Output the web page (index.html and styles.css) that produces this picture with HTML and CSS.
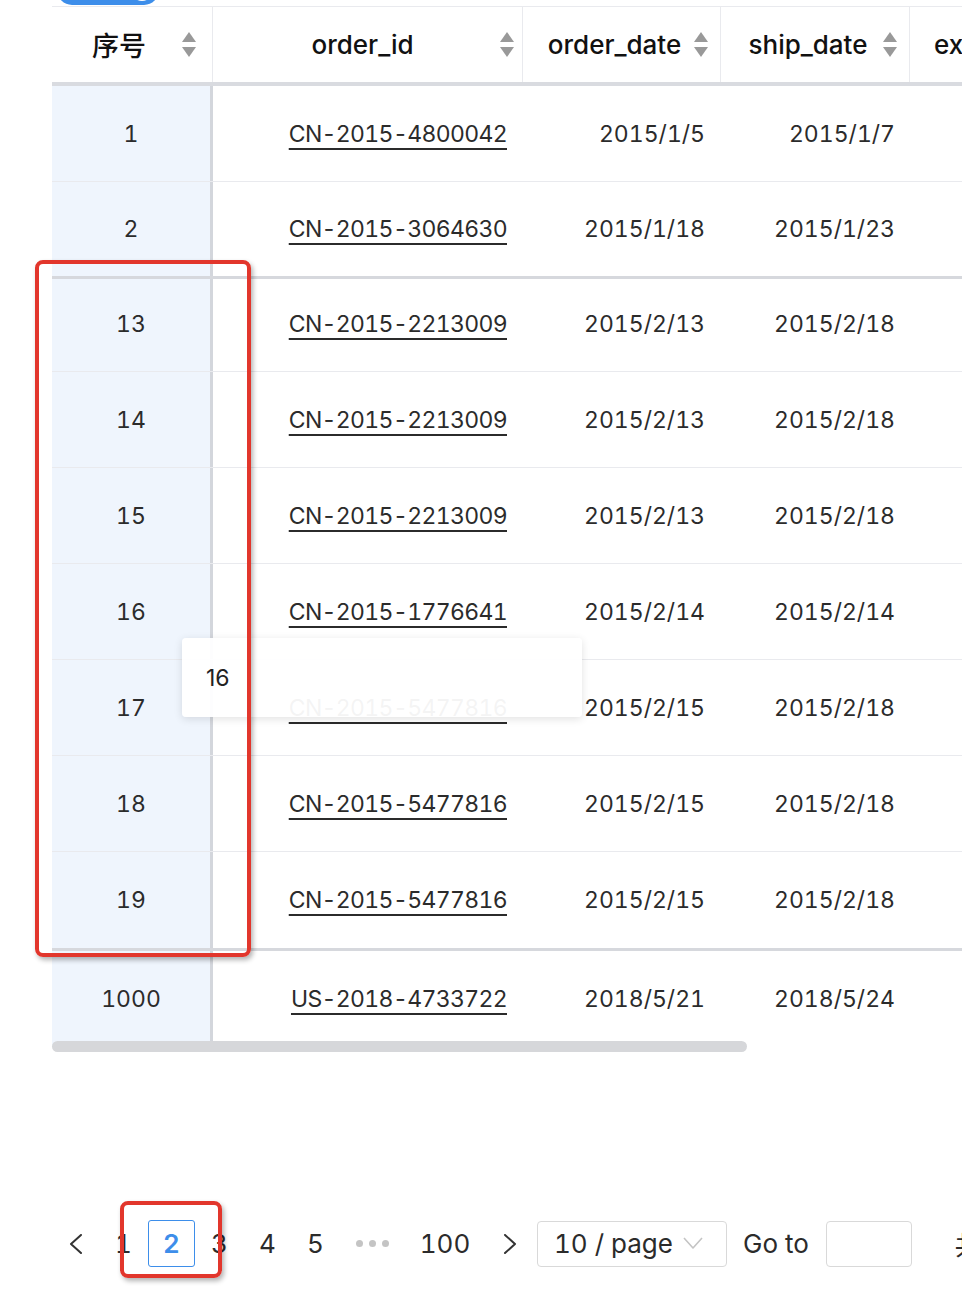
FILE: index.html
```html
<!DOCTYPE html>
<html lang="zh">
<head>
<meta charset="utf-8">
<title>Table</title>
<link rel="stylesheet" href="styles.css">
</head>
<body>
<div class="page">
  <div class="switch"><span class="knob"></span></div>
  <div class="table">
    <div class="row thead">
      <div class="th c1"><span class="lbl">序号</span><svg class="sort" width="14" height="25" viewBox="0 0 14 25"><path d="M7 0 L14 10 L0 10 Z"/><path d="M0 15 L14 15 L7 25 Z"/></svg></div>
      <div class="th c2"><span class="lbl">order_id</span><svg class="sort" width="14" height="25" viewBox="0 0 14 25"><path d="M7 0 L14 10 L0 10 Z"/><path d="M0 15 L14 15 L7 25 Z"/></svg></div>
      <div class="th c3"><span class="lbl">order_date</span><svg class="sort" width="14" height="25" viewBox="0 0 14 25"><path d="M7 0 L14 10 L0 10 Z"/><path d="M0 15 L14 15 L7 25 Z"/></svg></div>
      <div class="th c4"><span class="lbl">ship_date</span><svg class="sort" width="14" height="25" viewBox="0 0 14 25"><path d="M7 0 L14 10 L0 10 Z"/><path d="M0 15 L14 15 L7 25 Z"/></svg></div>
      <div class="th c5"><span class="lbl-left">ex_date</span></div>
    </div>

    <div class="section top">
      <div class="row"><div class="td c1">1</div><div class="td c2"><span class="link">CN-2015-4800042</span></div><div class="td c3">2015/1/5</div><div class="td c4">2015/1/7</div><div class="td c5"></div></div>
      <div class="row"><div class="td c1">2</div><div class="td c2"><span class="link">CN-2015-3064630</span></div><div class="td c3">2015/1/18</div><div class="td c4">2015/1/23</div><div class="td c5"></div></div>
    </div>

    <div class="section mid">
      <div class="mid-inner">
        <div class="row"><div class="td c1">13</div><div class="td c2"><span class="link">CN-2015-2213009</span></div><div class="td c3">2015/2/13</div><div class="td c4">2015/2/18</div><div class="td c5"></div></div>
        <div class="row"><div class="td c1">14</div><div class="td c2"><span class="link">CN-2015-2213009</span></div><div class="td c3">2015/2/13</div><div class="td c4">2015/2/18</div><div class="td c5"></div></div>
        <div class="row"><div class="td c1">15</div><div class="td c2"><span class="link">CN-2015-2213009</span></div><div class="td c3">2015/2/13</div><div class="td c4">2015/2/18</div><div class="td c5"></div></div>
        <div class="row"><div class="td c1">16</div><div class="td c2"><span class="link">CN-2015-1776641</span></div><div class="td c3">2015/2/14</div><div class="td c4">2015/2/14</div><div class="td c5"></div></div>
        <div class="row"><div class="td c1">17</div><div class="td c2"><span class="link">CN-2015-5477816</span></div><div class="td c3">2015/2/15</div><div class="td c4">2015/2/18</div><div class="td c5"></div></div>
        <div class="row"><div class="td c1">18</div><div class="td c2"><span class="link">CN-2015-5477816</span></div><div class="td c3">2015/2/15</div><div class="td c4">2015/2/18</div><div class="td c5"></div></div>
        <div class="row"><div class="td c1">19</div><div class="td c2"><span class="link">CN-2015-5477816</span></div><div class="td c3">2015/2/15</div><div class="td c4">2015/2/18</div><div class="td c5"></div></div>
      </div>
    </div>

    <div class="section last">
      <div class="row"><div class="td c1">1000</div><div class="td c2"><span class="link">US-2018-4733722</span></div><div class="td c3">2018/5/21</div><div class="td c4">2018/5/24</div><div class="td c5"></div></div>
    </div>

    <div class="hscroll"></div>
    <div class="tooltip">16</div>
  </div>

  <div class="pager">
    <div class="pg-item arrow"><svg width="14" height="20" viewBox="0 0 14 20"><path d="M12 1 L2 10 L12 19" fill="none" stroke="#333" stroke-width="2" stroke-linecap="round" stroke-linejoin="round"/></svg></div>
    <div class="pg-item">1</div>
    <div class="pg-item active">2</div>
    <div class="pg-item">3</div>
    <div class="pg-item">4</div>
    <div class="pg-item">5</div>
    <div class="pg-item dots"><span class="dot"></span><span class="dot"></span><span class="dot"></span></div>
    <div class="pg-item wide">100</div>
    <div class="pg-item arrow"><svg width="14" height="20" viewBox="0 0 14 20"><path d="M2 1 L12 10 L2 19" fill="none" stroke="#333" stroke-width="2" stroke-linecap="round" stroke-linejoin="round"/></svg></div>
    <div class="select"><span>10 / page</span><svg width="20" height="13" viewBox="0 0 20 13"><path d="M1 1 L10 11 L19 1" fill="none" stroke="#c4c4c4" stroke-width="1.6" stroke-linejoin="round"/></svg></div>
    <span class="goto">Go to</span>
    <div class="input"></div>
    <span class="total">共 1000 条</span>
  </div>

  <div class="mark mark-col"></div>
  <div class="mark mark-page"></div>
</div>
</body>
</html>
```

FILE: styles.css
```css
html, body {
  margin: 0;
  padding: 0;
  overflow: hidden;
  background: #ffffff;
}
body {
  font-family: Inter, "Noto Sans CJK SC", sans-serif;
  font-variant-numeric: tabular-nums;
  color: #2b2b2b;
  width: 962px;
  height: 1316px;
}
.page {
  position: relative;
  display: flow-root;
  padding-left: 52px;
  height: 1316px;
  box-sizing: border-box;
}
.switch {
  width: 102px;
  height: 30px;
  margin-top: -25px;
  margin-left: 5px;
  border-radius: 15px;
  background: #3d8eea;
  display: flex;
  justify-content: flex-end;
  align-items: center;
  padding-right: 6px;
  box-sizing: border-box;
}
.knob {
  width: 22px;
  height: 22px;
  border-radius: 50%;
  background: #ffffff;
}
.table {
  position: relative;
  width: 1200px;
  margin-top: 1px;
}
.row {
  display: grid;
  grid-template-columns: 161px 310px 198px 189px 342px;
  height: 96px;
  border-bottom: 1px solid #e9eaee;
  box-sizing: border-box;
}
.section .row:last-child {
  border-bottom: none;
  height: 95px;
}
.section.top .row:last-child { height: 94px; }
.thead {
  height: 80px;
  border-top: 1px solid #e9eaee;
  border-bottom: 4px solid #d9dbe0;
}
.th {
  display: flex;
  align-items: center;
  padding: 0 12px 0 12px;
  border-right: 1px solid #e9eaee;
  font-size: 26px;
  font-weight: 500;
  color: #111111;
  box-sizing: border-box;
}
.th.c1 { padding-right: 16px; padding-left: 4px; font-size: 27px; }
.th.c2 { padding-right: 8px; }
.th .lbl {
  flex: 1;
  text-align: center;
}
.th .lbl-left {
  padding-left: 12px;
  white-space: nowrap;
}
.th.c5 { border-right: none; }
.sort { fill: #999999; flex: none; }
.section {
  border-bottom: 3px solid #d6d8dd;
}
.section.last { border-bottom: none; }
.mid {
  height: 669px;
  overflow: hidden;
}
.mid-inner { margin-top: -3px; }
.mid .row:last-child { height: 96px; }
.td {
  display: flex;
  align-items: center;
  font-size: 23px;
  color: #2b2b2b;
  box-sizing: border-box;
  white-space: nowrap;
}
.td.c1 {
  justify-content: center;
  background: #eff5fd;
  border-right: 3px solid #d3d6dc;
}
.td.c2, .td.c3, .td.c4 {
  justify-content: flex-end;
  padding-right: 16px;
}
.td.c4 { padding-right: 15px; }
.link {
  text-decoration: underline;
  text-decoration-thickness: 2px;
  text-underline-offset: 6px;
  letter-spacing: -0.65px;
  color: #2b2b2b;
}
.hscroll {
  position: absolute;
  left: 0;
  bottom: -6px;
  width: 695px;
  height: 11px;
  border-radius: 6px;
  background: #d6d7da;
}
.tooltip {
  position: absolute;
  left: 130px;
  top: 632px;
  width: 400px;
  height: 79px;
  box-sizing: border-box;
  padding-left: 24px;
  display: flex;
  align-items: center;
  background: rgba(255, 255, 255, 0.95);
  border-radius: 4px;
  box-shadow: 0 2px 8px rgba(0, 0, 0, 0.12);
  font-size: 23px;
  font-variant-numeric: normal;
  color: #222222;
}
.pager {
  display: flex;
  align-items: center;
  gap: 1px;
  margin-top: 174px;
  height: 47px;
  font-size: 26px;
  color: #2b2b2b;
  white-space: nowrap;
}
.pg-item {
  width: 47px;
  height: 47px;
  display: flex;
  align-items: center;
  justify-content: center;
  box-sizing: border-box;
  flex: none;
}
.pg-item.active {
  border: 1px solid #3d8eea;
  border-radius: 3px;
  color: #3d8eea;
  font-weight: 600;
}
.pg-item.dots {
  width: 64px;
  gap: 6px;
}
.dot {
  width: 7px;
  height: 7px;
  border-radius: 50%;
  background: #c4c4c4;
}
.pg-item.wide { width: 80px; }
.select {
  margin-left: 3px;
  width: 190px;
  height: 46px;
  box-sizing: border-box;
  border: 1px solid #d9d9d9;
  border-radius: 4px;
  display: flex;
  align-items: center;
  justify-content: space-between;
  padding: 0 23px 0 16px;
  flex: none;
}
.goto { margin-left: 15px; }
.input {
  margin-left: 16px;
  width: 86px;
  height: 46px;
  box-sizing: border-box;
  border: 1px solid #d9d9d9;
  border-radius: 4px;
  flex: none;
}
.total { margin-left: 42px; }
.mark {
  position: absolute;
  border: 4px solid #e2362c;
  border-radius: 8px;
  box-shadow: 2px 3px 5px rgba(0, 0, 0, 0.3);
  box-sizing: border-box;
}
.mark-col {
  left: 35px;
  top: 260px;
  width: 216px;
  height: 697px;
}
.mark-page {
  left: 120px;
  top: 1201px;
  width: 102px;
  height: 77px;
}
```
